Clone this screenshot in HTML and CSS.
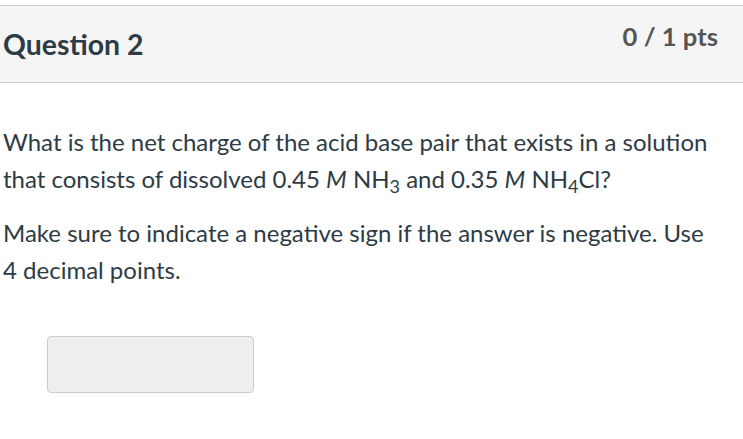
FILE: index.html
```html
<!DOCTYPE html>
<html>
<head>
<meta charset="utf-8">
<link rel="stylesheet" href="styles.css">
</head>
<body>
<div class="question">
  <div class="header">
    <h2 class="title">Question 2</h2>
    <div class="pts">0 / 1 pts</div>
  </div>
  <div class="content">
    <p>What is the net charge of the acid base pair that exists in a solution that consists of dissolved 0.45 <i>M</i> NH<sub>3</sub> and 0.35 <i>M</i> NH<sub>4</sub>Cl?</p>
    <p>Make sure to indicate a negative sign if the answer is negative. Use 4 decimal points.</p>
    <div class="answer"><div class="input"></div></div>
  </div>
</div>
</body>
</html>
```
FILE: styles.css
```css
html, body { margin: 0; padding: 0; background: #fff; }
body { font-family: Lato, "Noto Sans", sans-serif; color: #2d3b45; }
.question { padding-top: 5px; }
.header {
  display: flex; justify-content: space-between; align-items: flex-start;
  background: #f5f5f5;
  border-top: 1px solid #c7cdd1;
  border-bottom: 1px solid #c7cdd1;
  height: 76px;
  padding: 0 25px 0 3px;
}
.title { margin: 0; font-size: 28.4px; font-weight: 700; line-height: 1; padding-top: 24px; }
.pts { font-size: 25.6px; font-weight: 700; color: #555; line-height: 1; padding-top: 18px; }
.content { padding: 40px 20px 0 3px; }
.content p { margin: 0 0 17px; font-size: 24px; line-height: 37px; }
.content sub { font-size: 0.75em; line-height: 0; vertical-align: -0.25em; }
.answer { padding: 31px 0 0 44px; }
.input { width: 205px; height: 55px; background: #eee; border: 1px solid #ccc; border-radius: 4px; }
```
